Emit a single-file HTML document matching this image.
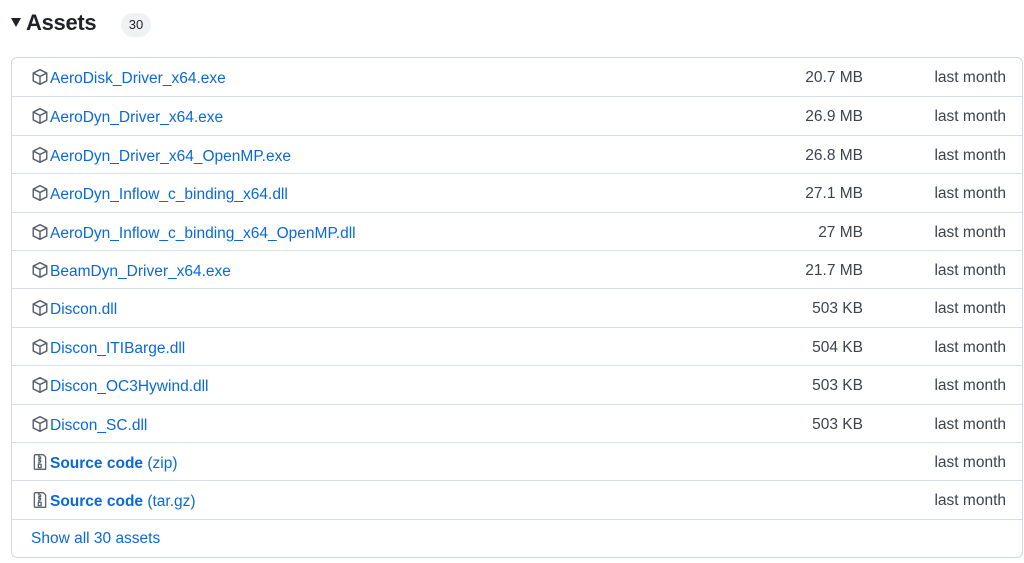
<!DOCTYPE html>
<html><head><meta charset="utf-8"><style>
body{margin:0;background:#fff;font-family:"Liberation Sans",Arial,sans-serif;width:1024px;height:563px;overflow:hidden;color:#1f2328}
.h{position:absolute;left:11px;top:10px;font-size:22px;font-weight:bold;color:#1f2328;letter-spacing:-0.3px}
.h .t{display:inline-block;width:0;height:0;border-left:5px solid transparent;border-right:5px solid transparent;border-top:9px solid #1f2328;margin-right:5px;vertical-align:3px}
.cnt{position:absolute;left:121px;top:13px;width:30px;height:24px;border-radius:12px;background:#eff1f3;font-size:13px;text-align:center;line-height:24px;font-weight:500}
.box{position:absolute;left:11px;top:57px;width:1010px;height:499px;border:1px solid #d1d9e0;border-radius:6px}
.row{position:absolute;left:0;width:1010px;height:38px;border-top:1px solid #d8dee4}
.row:first-child{border-top:none}
.n{position:absolute;left:19px;top:10px;font-size:15.5px;color:#0969da;white-space:nowrap}
.n b{font-weight:bold}
.n svg{vertical-align:-3px;margin-right:1px}
.s{position:absolute;right:159px;top:11px;font-size:15.5px;color:#3d444d}
.d{position:absolute;right:16px;top:11px;font-size:15.5px;color:#3d444d}
.g{color:#0969da;font-weight:normal}
</style></head><body>
<div class="h"><span class="t"></span>Assets</div>
<div class="cnt">30</div>
<div class="box">
<div class="row" style="top:0"><div class="n"><svg width="18" height="18" viewBox="0 0 16 16"><path d="M8 1.5l6 3v7l-6 3-6-3v-7z M2 4.5l6 3 6-3 M8 7.5v7" fill="none" stroke="#59636e" stroke-width="1.3" stroke-linejoin="round"/></svg>AeroDisk_Driver_x64.exe</div><div class="s">20.7 MB</div><div class="d">last month</div></div>
<div class="row" style="top:38.4px"><div class="n"><svg width="18" height="18" viewBox="0 0 16 16"><path d="M8 1.5l6 3v7l-6 3-6-3v-7z M2 4.5l6 3 6-3 M8 7.5v7" fill="none" stroke="#59636e" stroke-width="1.3" stroke-linejoin="round"/></svg>AeroDyn_Driver_x64.exe</div><div class="s">26.9 MB</div><div class="d">last month</div></div>
<div class="row" style="top:76.8px"><div class="n"><svg width="18" height="18" viewBox="0 0 16 16"><path d="M8 1.5l6 3v7l-6 3-6-3v-7z M2 4.5l6 3 6-3 M8 7.5v7" fill="none" stroke="#59636e" stroke-width="1.3" stroke-linejoin="round"/></svg>AeroDyn_Driver_x64_OpenMP.exe</div><div class="s">26.8 MB</div><div class="d">last month</div></div>
<div class="row" style="top:115.2px"><div class="n"><svg width="18" height="18" viewBox="0 0 16 16"><path d="M8 1.5l6 3v7l-6 3-6-3v-7z M2 4.5l6 3 6-3 M8 7.5v7" fill="none" stroke="#59636e" stroke-width="1.3" stroke-linejoin="round"/></svg>AeroDyn_Inflow_c_binding_x64.dll</div><div class="s">27.1 MB</div><div class="d">last month</div></div>
<div class="row" style="top:153.6px"><div class="n"><svg width="18" height="18" viewBox="0 0 16 16"><path d="M8 1.5l6 3v7l-6 3-6-3v-7z M2 4.5l6 3 6-3 M8 7.5v7" fill="none" stroke="#59636e" stroke-width="1.3" stroke-linejoin="round"/></svg>AeroDyn_Inflow_c_binding_x64_OpenMP.dll</div><div class="s">27 MB</div><div class="d">last month</div></div>
<div class="row" style="top:192px"><div class="n"><svg width="18" height="18" viewBox="0 0 16 16"><path d="M8 1.5l6 3v7l-6 3-6-3v-7z M2 4.5l6 3 6-3 M8 7.5v7" fill="none" stroke="#59636e" stroke-width="1.3" stroke-linejoin="round"/></svg>BeamDyn_Driver_x64.exe</div><div class="s">21.7 MB</div><div class="d">last month</div></div>
<div class="row" style="top:230.4px"><div class="n"><svg width="18" height="18" viewBox="0 0 16 16"><path d="M8 1.5l6 3v7l-6 3-6-3v-7z M2 4.5l6 3 6-3 M8 7.5v7" fill="none" stroke="#59636e" stroke-width="1.3" stroke-linejoin="round"/></svg>Discon.dll</div><div class="s">503 KB</div><div class="d">last month</div></div>
<div class="row" style="top:268.8px"><div class="n"><svg width="18" height="18" viewBox="0 0 16 16"><path d="M8 1.5l6 3v7l-6 3-6-3v-7z M2 4.5l6 3 6-3 M8 7.5v7" fill="none" stroke="#59636e" stroke-width="1.3" stroke-linejoin="round"/></svg>Discon_ITIBarge.dll</div><div class="s">504 KB</div><div class="d">last month</div></div>
<div class="row" style="top:307.2px"><div class="n"><svg width="18" height="18" viewBox="0 0 16 16"><path d="M8 1.5l6 3v7l-6 3-6-3v-7z M2 4.5l6 3 6-3 M8 7.5v7" fill="none" stroke="#59636e" stroke-width="1.3" stroke-linejoin="round"/></svg>Discon_OC3Hywind.dll</div><div class="s">503 KB</div><div class="d">last month</div></div>
<div class="row" style="top:345.6px"><div class="n"><svg width="18" height="18" viewBox="0 0 16 16"><path d="M8 1.5l6 3v7l-6 3-6-3v-7z M2 4.5l6 3 6-3 M8 7.5v7" fill="none" stroke="#59636e" stroke-width="1.3" stroke-linejoin="round"/></svg>Discon_SC.dll</div><div class="s">503 KB</div><div class="d">last month</div></div>
<div class="row" style="top:384px"><div class="n"><svg width="18" height="18" viewBox="0 0 16 16"><path d="M4 1.5h7l2 2v11H4q-1 0-1-1v-11q0-1 1-1z M7 2v1.5h1.5v1.5H7v1.5h1.5V8H7v2 M6.5 10h2.5v3H6.5z" fill="none" stroke="#59636e" stroke-width="1.2" stroke-linejoin="round"/></svg><b>Source code</b> <span class="g">(zip)</span></div><div class="d">last month</div></div>
<div class="row" style="top:422.4px"><div class="n"><svg width="18" height="18" viewBox="0 0 16 16"><path d="M4 1.5h7l2 2v11H4q-1 0-1-1v-11q0-1 1-1z M7 2v1.5h1.5v1.5H7v1.5h1.5V8H7v2 M6.5 10h2.5v3H6.5z" fill="none" stroke="#59636e" stroke-width="1.2" stroke-linejoin="round"/></svg><b>Source code</b> <span class="g">(tar.gz)</span></div><div class="d">last month</div></div>
<div class="row" style="top:460.8px"><div class="n" style="left:19px">Show all 30 assets</div></div>
</div>
</body></html>
